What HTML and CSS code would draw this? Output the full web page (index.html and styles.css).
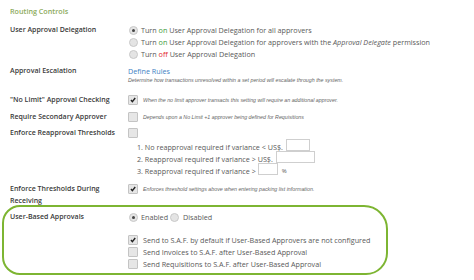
FILE: index.html
```html
<!DOCTYPE html>
<html>
<head>
<meta charset="utf-8">
<link rel="stylesheet" href="styles.css">
</head>
<body>
<div class="page">
  <div class="title">Routing Controls</div>

  <div class="row r-uad">
    <div class="label">User Approval Delegation</div>
    <div class="ctrl">
      <div class="line"><span class="radio on"></span><span class="txt">Turn <b class="g">on</b> User Approval Delegation for all approvers</span></div>
      <div class="line"><span class="radio"></span><span class="txt">Turn <b class="g">on</b> User Approval Delegation for approvers with the <i>Approval Delegate</i> permission</span></div>
      <div class="line"><span class="radio"></span><span class="txt">Turn <b class="r">off</b> User Approval Delegation</span></div>
    </div>
  </div>

  <div class="row r-ae">
    <div class="label">Approval Escalation</div>
    <div class="ctrl">
      <div class="line"><a class="link">Define Rules</a></div>
      <div class="desc">Determine how transactions unresolved within a set period will escalate through the system.</div>
    </div>
  </div>

  <div class="row r-nl">
    <div class="label">"No Limit" Approval Checking</div>
    <div class="ctrl">
      <div class="line"><span class="cb checked"><svg viewBox="0 0 9 9"><path d="M2.2 4.6 L3.8 6.4 L7 2.3" fill="none" stroke="#222" stroke-width="1.6"/></svg></span><span class="desc inl">When the no limit approver transacts this setting will require an additional approver.</span></div>
    </div>
  </div>

  <div class="row r-rs">
    <div class="label">Require Secondary Approver</div>
    <div class="ctrl">
      <div class="line"><span class="cb"></span><span class="desc inl">Depends upon a <i>No Limit +1</i> approver being defined for Requisitions</span></div>
    </div>
  </div>

  <div class="row r-er">
    <div class="label">Enforce Reapproval Thresholds</div>
    <div class="ctrl">
      <div class="line"><span class="cb"></span></div>
      <div class="subs">
        <div class="line"><span class="txt">1. No reapproval required if variance &lt; US$.</span><span class="inp w1"></span></div>
        <div class="line"><span class="txt">2. Reapproval required if variance &gt; US$.</span><span class="inp w2"></span></div>
        <div class="line"><span class="txt">3. Reapproval required if variance &gt;</span><span class="inp w3"></span><span class="txt pct">%</span></div>
      </div>
    </div>
  </div>

  <div class="row r-et">
    <div class="label wrap">Enforce Thresholds During Receiving</div>
    <div class="ctrl">
      <div class="line"><span class="cb checked"><svg viewBox="0 0 9 9"><path d="M2.2 4.6 L3.8 6.4 L7 2.3" fill="none" stroke="#222" stroke-width="1.6"/></svg></span><span class="desc inl">Enforces threshold settings above when entering packing list information.</span></div>
    </div>
  </div>

  <div class="highlight">
    <div class="row r-uba">
      <div class="label">User-Based Approvals</div>
      <div class="ctrl">
        <div class="line"><span class="radio on"></span><span class="txt">Enabled</span><span class="radio sp"></span><span class="txt">Disabled</span></div>
      </div>
    </div>
    <div class="row r-send">
      <div class="label"></div>
      <div class="ctrl">
        <div class="line"><span class="cb checked"><svg viewBox="0 0 9 9"><path d="M2.2 4.6 L3.8 6.4 L7 2.3" fill="none" stroke="#222" stroke-width="1.6"/></svg></span><span class="txt">Send to S.A.F. by default if User-Based Approvers are not configured</span></div>
        <div class="line"><span class="cb"></span><span class="txt">Send Invoices to S.A.F. after User-Based Approval</span></div>
        <div class="line"><span class="cb"></span><span class="txt">Send Requisitions to S.A.F. after User-Based Approval</span></div>
      </div>
    </div>
  </div>
</div>
</body>
</html>
```

FILE: styles.css
```css
html, body {
  margin: 0;
  padding: 0;
  background: #ffffff;
}
.page {
  width: 474px;
  height: 280px;
  overflow: hidden;
  padding-left: 10px;
  box-sizing: border-box;
  font-family: "Open Sans", "Liberation Sans", sans-serif;
  font-size: 7px;
  color: #555;
}
.title {
  padding-top: 5px;
  height: 19px;
  line-height: 12px;
  color: #8caa5c;
  font-weight: 600;
  font-size: 7.2px;
}
.row {
  display: grid;
  grid-template-columns: 118px 1fr;
}
.label {
  line-height: 12px;
  font-weight: 600;
  color: #3a3a3a;
  white-space: nowrap;
}
.label.wrap {
  white-space: normal;
  width: 104px;
}
.ctrl {
  display: flex;
  flex-direction: column;
}
.line {
  height: 12px;
  line-height: 12px;
  display: flex;
  align-items: center;
  white-space: nowrap;
}
.txt {
  color: #595959;
  font-size: 7.2px;
}
.link {
  color: #3e82c4;
  font-size: 7.2px;
}
b.g {
  font-weight: 400;
  color: #3f9b3a;
}
b.r {
  font-weight: 400;
  color: #e3262a;
}
.radio {
  width: 7px;
  height: 7px;
  border-radius: 50%;
  background: #e4e4e4;
  border: 0.5px solid #c9c9c9;
  margin-left: 1px;
  margin-right: 3px;
  display: inline-flex;
  align-items: center;
  justify-content: center;
  flex: none;
}
.radio.on::after {
  content: "";
  width: 3px;
  height: 3px;
  border-radius: 50%;
  background: #444;
}
.radio.sp {
  margin-left: 2px;
  margin-right: 4px;
}
.cb {
  width: 8px;
  height: 8px;
  background: #e6e6e6;
  border: 0.5px solid #c4c4c4;
  border-radius: 1px;
  margin-right: 5px;
  flex: none;
  display: inline-flex;
}
.cb svg {
  width: 8px;
  height: 8px;
}
.desc {
  font-family: "Liberation Sans", Arial, sans-serif;
  font-style: italic;
  font-size: 5.3px;
  color: #666;
  line-height: 8px;
  white-space: nowrap;
}
.desc.inl {
  line-height: 12px;
}
.r-ae {
  margin-top: 5px;
}
.r-ae .desc {
  margin-top: -1px;
}
.r-nl {
  margin-top: 10px;
}
.r-rs {
  margin-top: 5px;
}
.r-er {
  margin-top: 4px;
}
.subs {
  padding-left: 9px;
  margin-top: 2px;
}
.inp {
  display: inline-block;
  height: 12px;
  border: 1px solid #cfcfcf;
  background: #fff;
  box-sizing: border-box;
  margin-left: 3px;
  position: relative;
  top: -2px;
}
.inp.w1 { width: 24px; }
.inp.w2 { width: 39px; }
.inp.w3 { width: 20px; margin-left: 2px; }
.pct {
  margin-left: 4px;
  font-size: 6px;
}
.r-et {
  margin-top: 6px;
}
.highlight {
  margin-top: -2px;
  margin-left: -8px;
  width: 386px;
  height: 70px;
  box-sizing: border-box;
  border: 2px solid #7db532;
  border-radius: 18px 24px 22px 18px;
  padding-left: 6px;
  padding-top: 4px;
}
.r-send {
  margin-top: 11px;
}
```
